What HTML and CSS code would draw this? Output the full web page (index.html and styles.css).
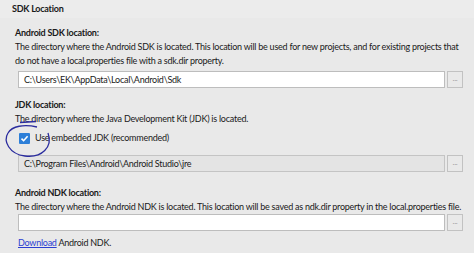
FILE: index.html
```html
<!DOCTYPE html>
<html lang="en">
<head>
    <meta charset="UTF-8">
    <title>SDK Location</title>
    <link rel="stylesheet" href="styles.css">
</head>
<body>
<div class="panel">
    <div class="header">SDK Location</div>

    <div class="section sdk">
        <div class="label">Android SDK location:</div>
        <div class="desc">The directory where the Android SDK is located. This location will be used for new projects, and for existing projects that<br>do not have a local.properties file with a sdk.dir property.</div>
        <div class="pathRow">
            <div class="path">C:\Users\EK\AppData\Local\Android\Sdk</div>
            <div class="browse">...</div>
        </div>
    </div>

    <div class="section jdk">
        <div class="label">JDK location:</div>
        <div class="desc">The directory where the Java Development Kit (JDK) is located.</div>
        <div class="check">
            <span class="box">
                <svg width="9" height="9" viewBox="0 0 9 9"><path d="M1.5 4.6 L3.6 6.7 L7.6 2.2" fill="none" stroke="#fff" stroke-width="1.6"/></svg>
            </span>
            <span>Use embedded JDK (recommended)</span>
        </div>
        <div class="pathRow jre">
            <div class="path disabled">C:\Program Files\Android\Android Studio\jre</div>
            <div class="browse">...</div>
        </div>
    </div>

    <div class="section ndk">
        <div class="label">Android NDK location:</div>
        <div class="desc">The directory where the Android NDK is located. This location will be saved as ndk.dir property in the local.properties file.</div>
        <div class="pathRow ndkRow">
            <div class="path"></div>
            <div class="browse">...</div>
        </div>
        <div class="download"><a href="#">Download</a> Android NDK.</div>
    </div>

    <!-- hand-drawn annotation over the checkbox -->
    <svg class="scribble" width="60" height="170" viewBox="0 0 60 170">
        <path d="M48 133 C53 147 42 158 25 156 C9 154 3 141 8 133 C12 126 24 124 37 127" fill="none" stroke="#2a2c9e" stroke-width="1.3"/>
        <path d="M20 122.5 L36 121.5" fill="none" stroke="#2a2c9e" stroke-width="1.3"/>
    </svg>
</div>
</body>
</html>
```

FILE: styles.css
```css
body {
    margin: 0;
    background: #e9e9e9;
    font-family: Lato, "Open Sans", sans-serif;
    font-size: 9px;
    letter-spacing: -0.25px;
    color: #1a1a1a;
}

.panel {
    position: relative;
    width: 474px;
    height: 253px;
    overflow: hidden;
}

.header {
    height: 18px;
    padding-left: 12px;
    line-height: 18px;
    font-weight: bold;
    background: #ececec;
}

.section {
    padding-left: 15px;
}

.sdk {
    padding-top: 8px;
}

.jdk {
    padding-top: 10px;
}

.ndk {
    padding-top: 14px;
}

.label {
    font-weight: bold;
    line-height: 14px;
}

.desc {
    line-height: 14px;
    white-space: nowrap;
}

.pathRow {
    display: flex;
    gap: 2px;
    margin-top: 3px;
    margin-left: 3px;
}

.pathRow.jre {
    margin-top: 10px;
}

.pathRow.ndkRow {
    margin-top: 0;
}

.path {
    width: 420px;
    height: 15px;
    padding-left: 5px;
    line-height: 15px;
    background: #fff;
    border: 1px solid #bdbdbd;
}

.path.disabled {
    background: #e4e4e4;
    border-color: #c4c4c4;
}

.browse {
    width: 14px;
    height: 15px;
    line-height: 12px;
    text-align: center;
    font-size: 8px;
    color: #999;
    border: 1px solid #c2c2c2;
    background: #e9e9e9;
}

.check {
    display: flex;
    align-items: center;
    gap: 5px;
    margin-top: 5px;
    margin-left: 4px;
    line-height: 14px;
}

.box {
    display: flex;
    align-items: center;
    justify-content: center;
    width: 11px;
    height: 11px;
    background: #2d7fd8;
    border-radius: 1px;
}

.download {
    margin-top: 5px;
    margin-left: 3px;
    line-height: 14px;
}

.download a {
    color: #2b3fd1;
}

.scribble {
    position: absolute;
    left: 0;
    top: 0;
}
```
